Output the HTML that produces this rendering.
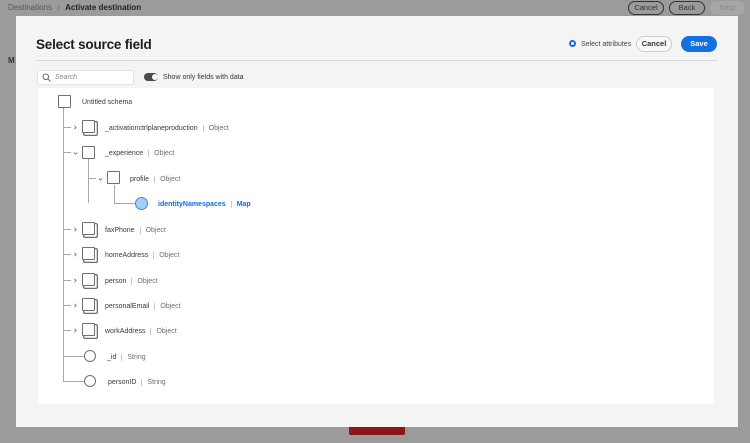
<!DOCTYPE html>
<html><head><style>
*{margin:0;padding:0;box-sizing:border-box}
body{width:750px;height:443px;background:#9b9b9b;font-family:"Liberation Sans",sans-serif;position:relative;overflow:hidden;color:#2c2c2c}
.a{position:absolute}
.t{font-size:7px;color:#3a3a3a;white-space:nowrap;transform:translateY(2px)}
.ty{color:#6e6e6e;border-left:1px solid #c8c8c8;padding-left:5px;margin-left:5px}
.bx{position:absolute;width:13px;height:13px;border:1.3px solid #707070;background:#fff;border-radius:1px}
.bx.s{box-shadow:2px 2px 0 -0.3px #fff,2px 2px 0 1px #707070}
.ci{position:absolute;width:12px;height:12px;border:1.3px solid #707070;border-radius:50%;background:#fff}
.vl{position:absolute;border-left:1px solid #a8a8a8}
.hl{position:absolute;border-top:1px solid #a8a8a8}
.ch{position:absolute;width:5px;height:5px}
</style></head><body>
<div class="a" style="left:8px;top:3px;font-size:8px;color:#555">Destinations <span style="color:#666;margin:0 3px">›</span> <b style="color:#222">Activate destination</b></div>
<div class="a" style="left:628px;top:1px;width:36px;height:14px;border:1.3px solid #333;border-radius:8px;font-size:7.5px;text-align:center;line-height:12px;color:#333">Cancel</div>
<div class="a" style="left:669px;top:1px;width:36px;height:14px;border:1.3px solid #333;border-radius:8px;font-size:7.5px;text-align:center;line-height:12px;color:#333">Back</div>
<div class="a" style="left:710px;top:1px;width:35px;height:14px;background:#a6a6a6;border-radius:8px;font-size:7.5px;text-align:center;line-height:14px;color:#888">Next</div>
<div class="a" style="left:8px;top:56px;font-size:8px;font-weight:bold;color:#333">M</div>
<div class="a" style="left:349px;top:427px;width:56px;height:8px;background:#8a1616;border-radius:0 0 2px 2px"></div>
<div class="a" style="left:16px;top:16px;width:722px;height:411px;background:#f4f4f4"></div>
<div class="a" style="left:36px;top:37px;font-size:13.5px;font-weight:bold;color:#1e1e1e;letter-spacing:-0.2px">Select source field</div>
<div class="a" style="left:36px;top:60px;width:681px;height:1.3px;background:#d8d8d8"></div>
<div class="a" style="left:569px;top:40px;width:7px;height:7px;border-radius:50%;background:#fff;border:2.2px solid #1a6be0"></div>
<div class="a" style="left:581px;top:41px;font-size:7px;color:#444">Select attributes</div>
<div class="a" style="left:636px;top:36px;width:36px;height:16px;border:1.3px solid #ccc;border-radius:9px;background:#f8f8f8;font-size:7.5px;font-weight:bold;text-align:center;line-height:14px;color:#333">Cancel</div>
<div class="a" style="left:681px;top:36px;width:36px;height:16px;background:#1470e0;border-radius:9px;font-size:7.5px;font-weight:bold;text-align:center;line-height:16px;color:#fff">Save</div>
<div class="a" style="left:37px;top:70px;width:97px;height:15px;background:#fff;border:1px solid #e4e4e4;border-radius:2px"></div>
<svg class="a" style="left:42px;top:73px" width="9" height="9"><circle cx="3.8" cy="3.8" r="2.8" fill="none" stroke="#666" stroke-width="1"/><line x1="5.8" y1="5.8" x2="8.5" y2="8.5" stroke="#666" stroke-width="1"/></svg>
<div class="a" style="left:55px;top:74px;font-size:7px;font-style:italic;color:#888">Search</div>
<div class="a" style="left:144px;top:73px;width:14px;height:8px;border-radius:4px;background:#4a4a4a"></div>
<div class="a" style="left:152px;top:74px;width:6px;height:6px;border-radius:50%;background:#fff"></div>
<div class="a" style="left:163px;top:74px;font-size:7px;color:#333">Show only fields with data</div>
<div class="a" style="left:38px;top:88px;width:676px;height:316px;background:#fff"></div>

<div class="vl" style="left:63px;top:108px;height:274px"></div>
<div class="vl" style="left:88px;top:159px;height:44px"></div>
<div class="vl" style="left:114px;top:185px;height:18px"></div>
<div class="hl" style="left:114px;top:203px;width:22px"></div>
<div class="bx" style="left:58px;top:95px"></div>
<div class="a t" style="left:82px;top:97px">Untitled schema</div>

<svg width="0" height="0" style="position:absolute"><defs><path id="r" d="M1.5 0.8 L3.2 2.5 L1.5 4.2" fill="none" stroke="#666" stroke-width="0.8"/><path id="d" d="M0.8 1.5 L2.5 3.2 L4.2 1.5" fill="none" stroke="#666" stroke-width="0.8"/></defs></svg>

<div class="hl" style="left:63px;top:127px;width:8px"></div><svg class="ch" style="left:73px;top:125px"><use href="#r"/></svg><div class="bx s" style="left:82px;top:120px"></div><div class="a t" style="left:105px;top:123px">_activationctrlplaneproduction<span class="ty">Object</span></div>
<div class="hl" style="left:63px;top:152px;width:8px"></div><svg class="ch" style="left:73px;top:151px"><use href="#d"/></svg><div class="bx" style="left:82px;top:146px"></div><div class="a t" style="left:105px;top:148px">_experience<span class="ty">Object</span></div>
<div class="hl" style="left:88px;top:178px;width:8px"></div><svg class="ch" style="left:98px;top:177px"><use href="#d"/></svg><div class="bx" style="left:107px;top:171px"></div><div class="a t" style="left:130px;top:174px">profile<span class="ty">Object</span></div>
<div class="a" style="left:135px;top:197px;width:13px;height:13px;border-radius:50%;background:#a9ccf7;border:1.3px solid #3a85e8"></div>
<div class="a t" style="left:158px;top:199px;color:#1668d8;font-weight:bold">identityNamespaces<span class="ty" style="color:#1668d8">Map</span></div>

<div class="hl" style="left:63px;top:229px;width:8px"></div><svg class="ch" style="left:73px;top:227px"><use href="#r"/></svg><div class="bx s" style="left:82px;top:222px"></div><div class="a t" style="left:105px;top:225px">faxPhone<span class="ty">Object</span></div>
<div class="hl" style="left:63px;top:254px;width:8px"></div><svg class="ch" style="left:73px;top:252px"><use href="#r"/></svg><div class="bx s" style="left:82px;top:247px"></div><div class="a t" style="left:105px;top:250px">homeAddress<span class="ty">Object</span></div>
<div class="hl" style="left:63px;top:280px;width:8px"></div><svg class="ch" style="left:73px;top:278px"><use href="#r"/></svg><div class="bx s" style="left:82px;top:273px"></div><div class="a t" style="left:105px;top:276px">person<span class="ty">Object</span></div>
<div class="hl" style="left:63px;top:305px;width:8px"></div><svg class="ch" style="left:73px;top:303px"><use href="#r"/></svg><div class="bx s" style="left:82px;top:298px"></div><div class="a t" style="left:105px;top:301px">personalEmail<span class="ty">Object</span></div>
<div class="hl" style="left:63px;top:330px;width:8px"></div><svg class="ch" style="left:73px;top:328px"><use href="#r"/></svg><div class="bx s" style="left:82px;top:323px"></div><div class="a t" style="left:105px;top:326px">workAddress<span class="ty">Object</span></div>
<div class="hl" style="left:63px;top:356px;width:21px"></div><div class="ci" style="left:84px;top:350px"></div><div class="a t" style="left:107px;top:352px">_id<span class="ty">String</span></div>
<div class="hl" style="left:63px;top:381px;width:21px"></div><div class="ci" style="left:84px;top:375px"></div><div class="a t" style="left:108px;top:377px">personID<span class="ty">String</span></div>
</body></html>
